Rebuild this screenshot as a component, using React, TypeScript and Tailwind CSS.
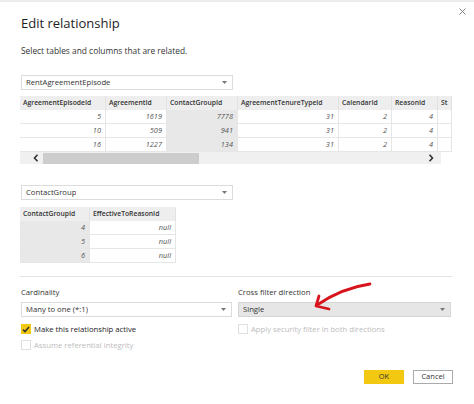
import React from "react";

const Caret = () => (
  <svg width="5" height="3" viewBox="0 0 5 3" className="shrink-0">
    <path d="M0 0 L5 0 L2.5 3 Z" fill="#777" />
  </svg>
);

function Select({ text, className = "", disabled = false }: { text: string; className?: string; disabled?: boolean }) {
  return (
    <div
      className={`flex items-center justify-between border pl-[4px] pr-[5px] ${
        disabled ? "bg-[#e6e6e6] border-[#d6d6d6]" : "bg-white border-[#dcdcdc]"
      } ${className}`}
    >
      <span className="truncate">{text}</span>
      <Caret />
    </div>
  );
}

const t1cols = [
  { name: "AgreementEpisodeId", w: "w-[86px]", vals: ["5", "10", "16"], sel: false },
  { name: "AgreementId", w: "w-[61px]", vals: ["1619", "509", "1227"], sel: false },
  { name: "ContactGroupId", w: "w-[71px]", vals: ["7778", "941", "134"], sel: true },
  { name: "AgreementTenureTypeId", w: "w-[101px]", vals: ["31", "31", "31"], sel: false },
  { name: "CalendarId", w: "w-[53px]", vals: ["2", "2", "2"], sel: false },
  { name: "ReasonId", w: "w-[46px]", vals: ["4", "4", "4"], sel: false },
  { name: "St", w: "w-[14px]", vals: ["", "", ""], sel: false },
];

const t2cols = [
  { name: "ContactGroupId", w: "w-[70px]", vals: ["4", "5", "6"], sel: true },
  { name: "EffectiveToReasonId", w: "w-[86px]", vals: ["null", "null", "null"], sel: false },
];

type Col = { name: string; w: string; vals: string[]; sel: boolean };

function Column({ c }: { c: Col }) {
  return (
    <div className={`${c.w} shrink-0 flex flex-col`}>
      <div className="h-[14px] flex items-center pl-[3px] bg-[#eeeeee] border-r border-[#e2e2e2] font-semibold text-[#333] text-[6.8px] whitespace-nowrap overflow-hidden">
        {c.name}
      </div>
      {c.vals.map((v, i) => (
        <div
          key={i}
          className={`h-[14px] flex items-center justify-end pr-[4px] border-r border-b border-[#e6e6e6] italic text-[7.4px] text-[#555] ${
            c.sel ? "bg-[#e8e8e8]" : "bg-white"
          }`}
        >
          {v}
        </div>
      ))}
    </div>
  );
}

function Check({ checked, disabled, label }: { checked?: boolean; disabled?: boolean; label: string }) {
  return (
    <div className={`flex items-center gap-[3px] h-[10px] text-[7.7px] leading-[10px] ${disabled ? "text-[#bdbdbd]" : "text-[#222]"}`}>
      {checked ? (
        <div className="w-[10px] h-[10px] bg-[#f2c811] flex items-center justify-center">
          <svg width="8" height="7" viewBox="0 0 8 7">
            <path d="M1 3.6 L3 5.6 L7 1" stroke="#333" strokeWidth="1.5" fill="none" />
          </svg>
        </div>
      ) : (
        <div className="w-[10px] h-[10px] border border-[#e0e0e0] bg-white" />
      )}
      <span>{label}</span>
    </div>
  );
}

export default function App() {
  return (
    <div className="relative w-[474px] h-[404px] bg-white border-t-2 border-[#ececec] overflow-hidden font-['Open_Sans',sans-serif] text-[#333]">
      <svg className="absolute top-[6px] right-[8px]" width="7" height="7" viewBox="0 0 7 7">
        <path d="M0.5 0.5 L6.5 6.5 M6.5 0.5 L0.5 6.5" stroke="#888" strokeWidth="1" />
      </svg>
      <div className="pl-[21px] pr-[21px] pt-[11px] flex flex-col">
        <h1 className="text-[13px] leading-[20px] font-medium text-[#1e1e1e]">Edit relationship</h1>
        <p className="mt-[12px] text-[8.4px] leading-[12px] text-[#333]">Select tables and columns that are related.</p>
        <Select text="RentAgreementEpisode" className="mt-[18px] w-[212px] h-[15px] text-[7.7px] text-[#333]" />
        <div className="mt-[6px] -ml-[1px] w-[432px] overflow-hidden flex flex-col">
          <div className="flex bg-[#eeeeee]">
            {t1cols.map((c) => (
              <Column key={c.name} c={c} />
            ))}
          </div>
          <div className="h-[12px] w-[421px] bg-[#f0f0f0] flex items-center">
            <div className="w-[23px] flex justify-end pr-[4px]">
              <svg width="6" height="8" viewBox="0 0 6 8">
                <path d="M4.5 0.8 L1.5 4 L4.5 7.2" stroke="#333" strokeWidth="1.6" fill="none" />
              </svg>
            </div>
            <div className="w-[156px] h-[11px] bg-[#cdcdcd]" />
            <div className="flex-1" />
            <div className="w-[16px] flex justify-start pl-[3px]">
              <svg width="6" height="8" viewBox="0 0 6 8">
                <path d="M1.5 0.8 L4.5 4 L1.5 7.2" stroke="#333" strokeWidth="1.6" fill="none" />
              </svg>
            </div>
          </div>
        </div>
        <Select text="ContactGroup" className="mt-[21px] w-[212px] h-[15px] text-[7.7px] text-[#333]" />
        <div className="mt-[7px] -ml-[1px] w-[432px] h-[70px] border-b border-[#e4e4e4] flex items-start">
          {t2cols.map((c) => (
            <Column key={c.name} c={c} />
          ))}
        </div>
        <div className="mt-[10px] grid grid-cols-[211px_213px] gap-x-[6px]">
          <div className="flex flex-col">
            <span className="text-[7.7px] leading-[11px] text-[#333]">Cardinality</span>
            <Select text="Many to one (*:1)" className="mt-[4px] h-[15px] text-[7.7px] text-[#333]" />
          </div>
          <div className="flex flex-col">
            <span className="text-[7.7px] leading-[11px] text-[#333]">Cross filter direction</span>
            <Select text="Single" disabled className="mt-[4px] h-[15px] text-[7.7px] text-[#333]" />
          </div>
          <div className="mt-[7px] flex flex-col gap-[6px]">
            <Check checked label="Make this relationship active" />
            <Check disabled label="Assume referential integrity" />
          </div>
          <div className="mt-[7px]">
            <Check disabled label="Apply security filter in both directions" />
          </div>
        </div>
        <div className="mt-[20px] flex justify-end gap-[9px]">
          <button className="w-[40px] h-[14px] bg-[#f2c811] text-[7.5px] text-[#333] flex items-center justify-center">OK</button>
          <button className="w-[40px] h-[14px] bg-white border border-[#aaa] text-[7.5px] text-[#333] flex items-center justify-center">Cancel</button>
        </div>
      </div>
      <svg className="absolute inset-0 pointer-events-none" width="474" height="404" viewBox="0 0 474 404">
        <path d="M370 282 Q342 286 317 303" stroke="#d7141c" strokeWidth="2.8" fill="none" strokeLinecap="round" />
        <path d="M319 294 L316 304 L329 307" stroke="#d7141c" strokeWidth="2.8" fill="none" strokeLinecap="round" strokeLinejoin="round" />
      </svg>
    </div>
  );
}
